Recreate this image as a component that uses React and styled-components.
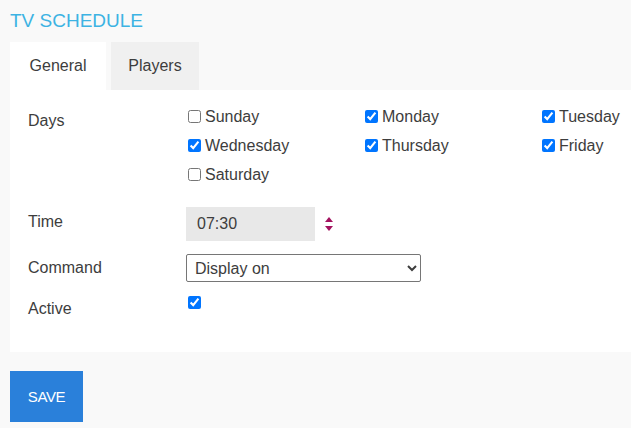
import React from "react";
import styled, { createGlobalStyle } from "styled-components";

const Global = createGlobalStyle`
  html, body { margin: 0; padding: 0; background: #f9f9f9; overflow: hidden; }
  body { font-family: "Liberation Sans", Arial, sans-serif; color: #3d3d3d; }
`;

const Page = styled.div`
  padding: 0 0 0 10px;
  width: 621px;
`;

const Title = styled.h1`
  margin: 0;
  height: 42px;
  display: flex;
  align-items: center;
  font-size: 19px;
  font-weight: normal;
  color: #3db3e3;
`;

const Tabs = styled.div`
  display: flex;
  gap: 5px;
  height: 48px;
`;

const Tab = styled.div`
  width: ${(p) => p.$w}px;
  display: flex;
  align-items: center;
  justify-content: center;
  font-size: 16px;
  color: #3d3d3d;
  background: ${(p) => (p.$active ? "#ffffff" : "#f0f0f0")};
`;

const Panel = styled.div`
  background: #fff;
  padding: 12px 0 33px 18px;
  display: flex;
  flex-direction: column;
`;

const Row = styled.div`
  display: flex;
  align-items: flex-start;
  margin-top: ${(p) => p.$mt || 0}px;
`;

const Label = styled.div`
  width: 158px;
  flex: none;
  font-size: 16px;
  line-height: 20px;
  padding-top: ${(p) => p.$pt || 0}px;
  color: #3d3d3d;
`;

const DaysGrid = styled.div`
  display: grid;
  grid-template-columns: 177px 177px auto;
  grid-auto-rows: 29px;
`;

const DayItem = styled.label`
  display: flex;
  align-items: center;
  font-size: 16px;
  color: #3d3d3d;
`;

const Check = styled.input.attrs({ type: "checkbox" })`
  width: 13px;
  height: 13px;
  margin: 0 4px 0 2px;
  flex: none;
`;

const TimeWrap = styled.div`
  display: flex;
  align-items: center;
  gap: 10px;
`;

const TimeInput = styled.input`
  box-sizing: border-box;
  width: 129px;
  height: 34px;
  border: none;
  background: #e8e8e8;
  padding: 0 11px;
  font-family: "Liberation Sans", Arial, sans-serif;
  font-size: 16px;
  color: #3d3d3d;
  outline: none;
`;

const Spinner = styled.svg`
  width: 8px;
  height: 16px;
  display: block;
`;

const Select = styled.select`
  box-sizing: border-box;
  width: 235px;
  height: 28px;
  border: 1px solid #767676;
  border-radius: 2px;
  background: #fff;
  font-family: "Liberation Sans", Arial, sans-serif;
  font-size: 16px;
  color: #3d3d3d;
  padding: 0 4px;
`;

const SaveButton = styled.button`
  margin-top: 19px;
  width: 73px;
  height: 51px;
  border: none;
  background: #2a80da;
  color: #fff;
  font-family: "Liberation Sans", Arial, sans-serif;
  font-size: 15px;
  letter-spacing: -0.4px;
  padding: 0;
`;

const days = [
  ["Sunday", false],
  ["Monday", true],
  ["Tuesday", true],
  ["Wednesday", true],
  ["Thursday", true],
  ["Friday", true],
  ["Saturday", false],
];

export default function App() {
  return (
    <Page>
      <Global />
      <Title>TV SCHEDULE</Title>
      <Tabs>
        <Tab $active $w={96}>General</Tab>
        <Tab $w={88}>Players</Tab>
      </Tabs>
      <Panel>
        <Row>
          <Label $pt={9}>Days</Label>
          <DaysGrid>
            {days.map(([d, c]) => (
              <DayItem key={d}>
                <Check defaultChecked={c} />
                {d}
              </DayItem>
            ))}
          </DaysGrid>
        </Row>
        <Row $mt={18}>
          <Label $pt={5}>Time</Label>
          <TimeWrap>
            <TimeInput readOnly value="07:30" />
            <Spinner viewBox="0 0 8 16">
              <path d="M4 1 L8 6 L0 6 Z" fill="#a3125f" />
              <path d="M0 10 L8 10 L4 15 Z" fill="#a3125f" />
            </Spinner>
          </TimeWrap>
        </Row>
        <Row $mt={13}>
          <Label $pt={4}>Command</Label>
          <Select defaultValue="on">
            <option value="on">Display on</option>
            <option value="off">Display off</option>
          </Select>
        </Row>
        <Row $mt={14}>
          <Label $pt={3}>Active</Label>
          <Check defaultChecked />
        </Row>
      </Panel>
      <SaveButton>SAVE</SaveButton>
    </Page>
  );
}
